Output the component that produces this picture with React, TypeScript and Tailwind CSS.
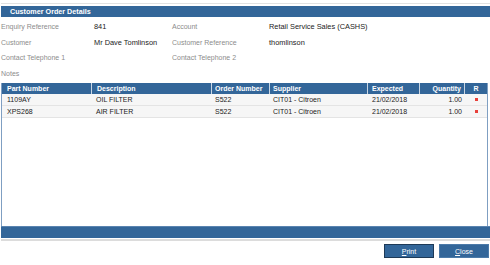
import React from "react";

const rows = [
  { part: "1109AY", desc: "OIL FILTER", order: "S522", supplier: "CIT01 - Citroen", expected: "21/02/2018", qty: "1.00" },
  { part: "XPS268", desc: "AIR FILTER", order: "S522", supplier: "CIT01 - Citroen", expected: "21/02/2018", qty: "1.00" },
];

const cols = "grid grid-cols-[90px_120px_58px_98px_52px_45px_22px]";

export default function App() {
  return (
    <div
      className="w-[490px] h-[265px] bg-white overflow-hidden flex text-[7px] leading-none"
      style={{ fontFamily: '"Liberation Sans", Arial, sans-serif' }}
    >
      <div className="w-[1px] h-[258px] bg-[#d4d4d4]" />
      <div className="flex-1 flex flex-col pt-[3px]">
        <div className="h-[1px] bg-[#e2e2e2] ml-[1px]" />
        <div className="h-[11px] mt-[2px] ml-[1px] bg-[#336699] text-white font-bold text-[7.2px] flex items-center pl-[9px]">
          Customer Order Details
        </div>
        <div className="ml-[1px] mr-[2px] grid grid-cols-[93px_78px_97px_1fr] auto-rows-[15.5px] pt-[2px] items-center">
          <div className="text-[#8c8c8c]">Enquiry Reference</div>
          <div className="text-[#222] text-[7.4px]">841</div>
          <div className="text-[#8c8c8c]">Account</div>
          <div className="text-[#222] text-[7.4px]">Retail Service Sales (CASHS)</div>
          <div className="text-[#8c8c8c]">Customer</div>
          <div className="text-[#222] text-[7.4px]">Mr Dave Tomlinson</div>
          <div className="text-[#8c8c8c]">Customer Reference</div>
          <div className="text-[#222] text-[7.4px]">thomlinson</div>
          <div className="text-[#8c8c8c]">Contact Telephone 1</div>
          <div></div>
          <div className="text-[#8c8c8c]">Contact Telephone 2</div>
          <div></div>
          <div className="text-[#8c8c8c]">Notes</div>
        </div>
        <div className="ml-[1px] mr-[2px] mt-[2px] h-[143px] flex flex-col border-x border-[#7f9fc2]">
          <div className={`${cols} h-[11px] bg-[#336699] text-white font-bold`}>
            <div className="pl-[5px] flex items-center border-r border-[#c9d6e4]">Part Number</div>
            <div className="pl-[5px] flex items-center border-r border-[#c9d6e4]">Description</div>
            <div className="pl-[3px] flex items-center border-r border-[#c9d6e4]">Order Number</div>
            <div className="pl-[3px] flex items-center border-r border-[#c9d6e4]">Supplier</div>
            <div className="pl-[4px] flex items-center border-r border-[#c9d6e4]">Expected</div>
            <div className="pr-[3px] flex items-center justify-end border-r border-[#c9d6e4]">Quantity</div>
            <div className="flex items-center justify-center">R</div>
          </div>
          {rows.map((r) => (
            <div key={r.part} className={`${cols} h-[12px] bg-[#f6f6f6] border-b border-[#e4e4e4] text-[#222]`}>
              <div className="pl-[5px] flex items-center">{r.part}</div>
              <div className="pl-[4px] flex items-center">{r.desc}</div>
              <div className="pl-[3px] flex items-center">{r.order}</div>
              <div className="pl-[3px] flex items-center">{r.supplier}</div>
              <div className="pl-[4px] flex items-center">{r.expected}</div>
              <div className="pr-[3px] flex items-center justify-end">{r.qty}</div>
              <div className="flex items-center justify-center">
                <span className="block w-[3px] h-[3px] bg-[#e8403a]" />
              </div>
            </div>
          ))}
          <div className="flex-1 bg-white" />
        </div>
        <div className="ml-[1px] h-[12px] bg-[#336699] border-t border-[#5a84b0]" />
        <div className="ml-[1px] h-[2px] mt-[1px] bg-[#dcdcdc]" />
        <div className="flex justify-end gap-[5px] mt-[3px] pr-[1px]">
          <button className="w-[50px] h-[14px] bg-[#336699] text-white text-[7px] border border-[#1e3a57] flex items-center justify-center">
            <span><span className="underline">P</span>rint</span>
          </button>
          <button className="w-[50px] h-[14px] bg-[#336699] text-white text-[7px] border border-[#4c7aa8] flex items-center justify-center">
            <span><span className="underline">C</span>lose</span>
          </button>
        </div>
      </div>
    </div>
  );
}
